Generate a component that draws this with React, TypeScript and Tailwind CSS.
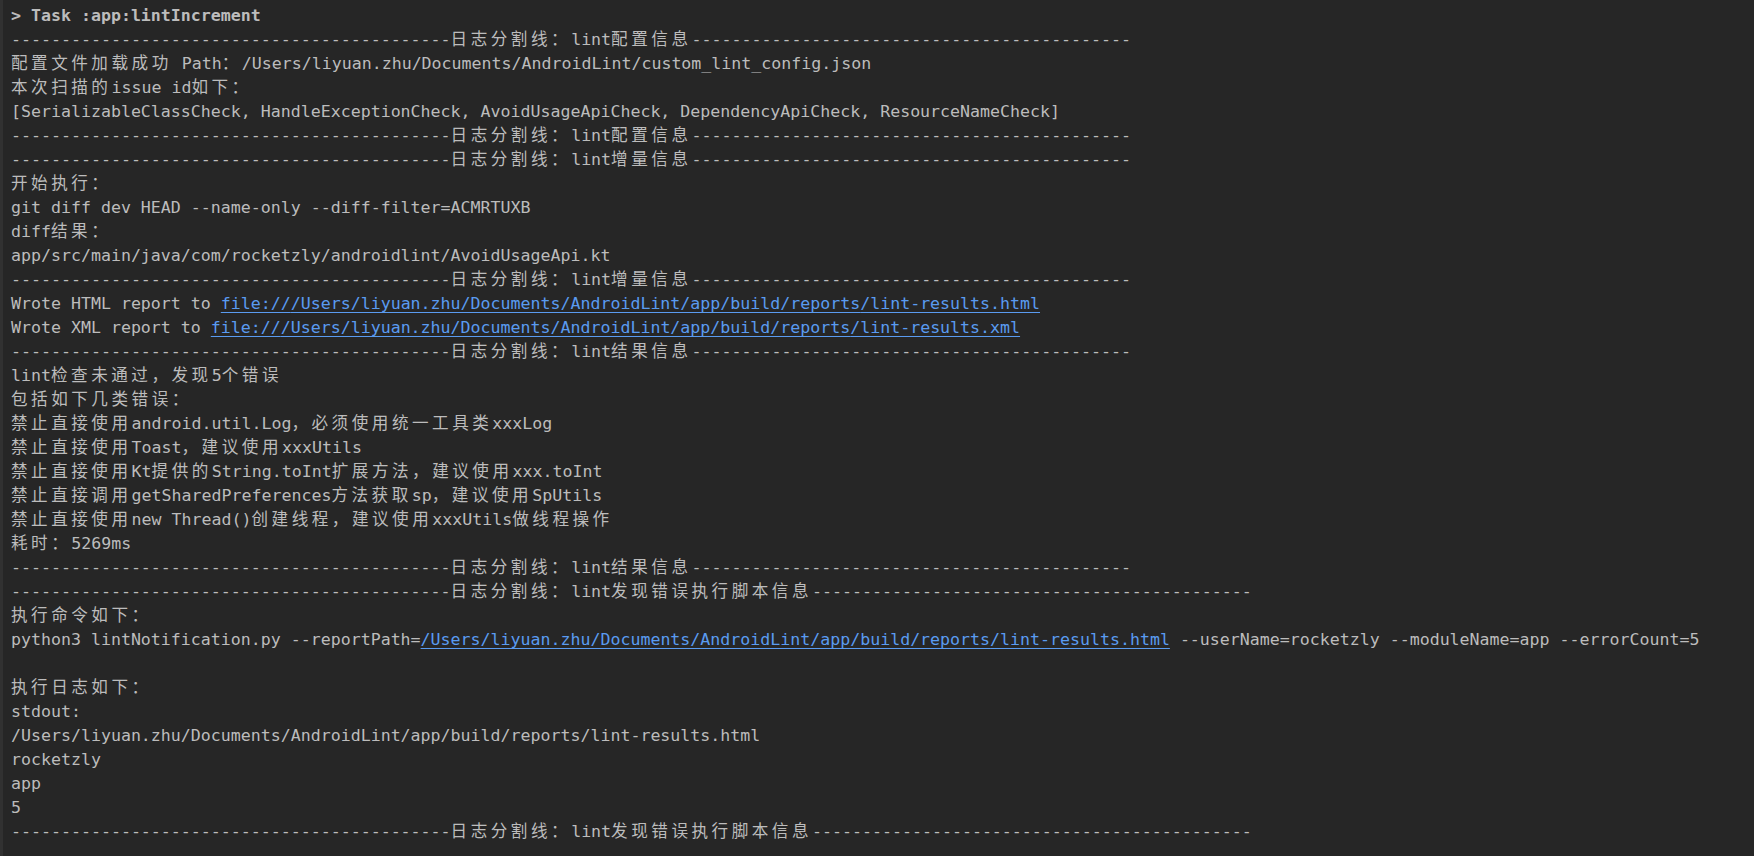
import { Fragment, type ReactNode } from "react";

const SEP_DASHES = "-".repeat(44);
const REPORTS_DIR = "/Users/liyuan.zhu/Documents/AndroidLint/app/build/reports";

// terminal gives CJK glyphs a double cell, so widen them a bit
function Wide({ text }: { text: string }) {
  const parts = text.split(/([\u3000-\u9fff\uff00-\uffef]+)/);
  return (
    <>
      {parts.map((p, i) =>
        i % 2 === 1 ? (
          <span key={i} className="tracking-[3.5px]">
            {p}
          </span>
        ) : (
          <Fragment key={i}>{p}</Fragment>
        ),
      )}
    </>
  );
}

function Line({ children, bold }: { children?: ReactNode; bold?: boolean }) {
  return (
    <div className={`h-6 whitespace-pre ${bold ? "font-bold" : ""}`}>
      {typeof children === "string" ? <Wide text={children} /> : children}
    </div>
  );
}

function Sep({ label }: { label: string }) {
  return <Line>{SEP_DASHES + "日志分割线：" + label + SEP_DASHES}</Line>;
}

function Link({ children }: { children: ReactNode }) {
  return (
    <span className="text-[#5a9bf0] underline decoration-1 underline-offset-[3px]">
      {children}
    </span>
  );
}

export default function App() {
  return (
    <div className="flex h-[856px] w-full overflow-hidden bg-[#262626]">
      <div className="w-[3px] shrink-0 bg-[#313131]" />
      <div
        className="flex-1 pl-2 pt-1 text-[16.6px] leading-6 text-[#bcbcbc]"
        style={{ fontFamily: '"DejaVu Sans Mono", "Noto Sans CJK SC", monospace' }}
      >
        <Line bold>{"> Task :app:lintIncrement"}</Line>
        <Sep label="lint配置信息" />
        <Line>配置文件加载成功 Path：/Users/liyuan.zhu/Documents/AndroidLint/custom_lint_config.json</Line>
        <Line>本次扫描的issue id如下：</Line>
        <Line>
          [SerializableClassCheck, HandleExceptionCheck, AvoidUsageApiCheck, DependencyApiCheck, ResourceNameCheck]
        </Line>
        <Sep label="lint配置信息" />
        <Sep label="lint增量信息" />
        <Line>开始执行：</Line>
        <Line>git diff dev HEAD --name-only --diff-filter=ACMRTUXB</Line>
        <Line>diff结果：</Line>
        <Line>app/src/main/java/com/rocketzly/androidlint/AvoidUsageApi.kt</Line>
        <Sep label="lint增量信息" />
        <Line>
          Wrote HTML report to <Link>file://{REPORTS_DIR}/lint-results.html</Link>
        </Line>
        <Line>
          Wrote XML report to <Link>file://{REPORTS_DIR}/lint-results.xml</Link>
        </Line>
        <Sep label="lint结果信息" />
        <Line>lint检查未通过，发现5个错误</Line>
        <Line>包括如下几类错误：</Line>
        <Line>禁止直接使用android.util.Log，必须使用统一工具类xxxLog</Line>
        <Line>禁止直接使用Toast，建议使用xxxUtils</Line>
        <Line>禁止直接使用Kt提供的String.toInt扩展方法，建议使用xxx.toInt</Line>
        <Line>禁止直接调用getSharedPreferences方法获取sp，建议使用SpUtils</Line>
        <Line>禁止直接使用new Thread()创建线程，建议使用xxxUtils做线程操作</Line>
        <Line>耗时：5269ms</Line>
        <Sep label="lint结果信息" />
        <Sep label="lint发现错误执行脚本信息" />
        <Line>执行命令如下：</Line>
        <Line>
          python3 lintNotification.py --reportPath=<Link>{REPORTS_DIR}/lint-results.html</Link> --userName=rocketzly
          --moduleName=app --errorCount=5
        </Line>
        <Line />
        <Line>执行日志如下：</Line>
        <Line>stdout:</Line>
        <Line>{REPORTS_DIR + "/lint-results.html"}</Line>
        <Line>rocketzly</Line>
        <Line>app</Line>
        <Line>5</Line>
        <Sep label="lint发现错误执行脚本信息" />
      </div>
    </div>
  );
}
